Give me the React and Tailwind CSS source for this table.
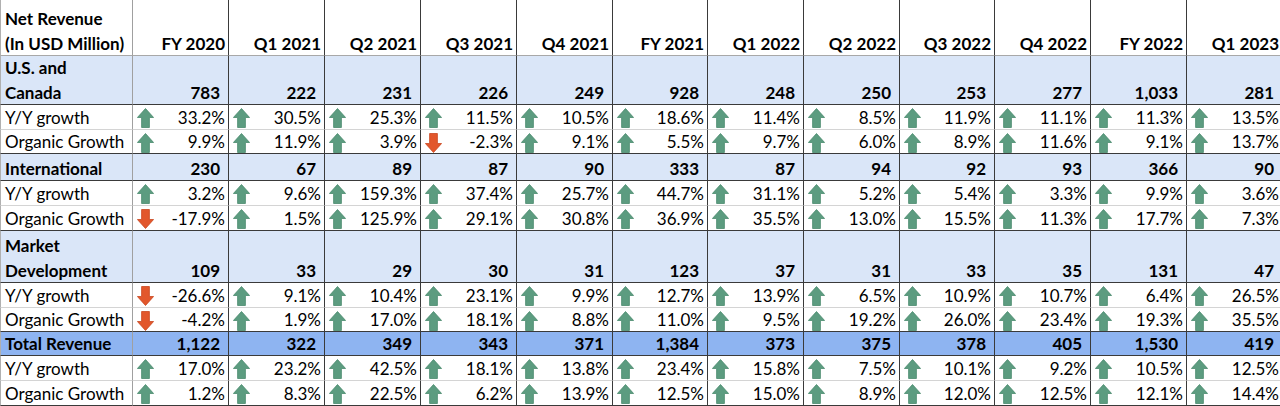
import React from "react";

const cols = ["FY 2020","Q1 2021","Q2 2021","Q3 2021","Q4 2021","FY 2021","Q1 2022","Q2 2022","Q3 2022","Q4 2022","FY 2022","Q1 2023"];

const rows = [
  { type: "blue", label: ["U.S. and", "Canada"], vals: ["783","222","231","226","249","928","248","250","253","277","1,033","281"] },
  { type: "yy", label: "Y/Y growth", vals: ["33.2","30.5","25.3","11.5","10.5","18.6","11.4","8.5","11.9","11.1","11.3","13.5"] },
  { type: "org", label: "Organic Growth", vals: ["9.9","11.9","3.9","-2.3","9.1","5.5","9.7","6.0","8.9","11.6","9.1","13.7"] },
  { type: "blue", label: "International", vals: ["230","67","89","87","90","333","87","94","92","93","366","90"] },
  { type: "yy", label: "Y/Y growth", vals: ["3.2","9.6","159.3","37.4","25.7","44.7","31.1","5.2","5.4","3.3","9.9","3.6"] },
  { type: "org", label: "Organic Growth", vals: ["-17.9","1.5","125.9","29.1","30.8","36.9","35.5","13.0","15.5","11.3","17.7","7.3"] },
  { type: "blue", label: ["Market", "Development"], vals: ["109","33","29","30","31","123","37","31","33","35","131","47"] },
  { type: "yy", label: "Y/Y growth", vals: ["-26.6","9.1","10.4","23.1","9.9","12.7","13.9","6.5","10.9","10.7","6.4","26.5"] },
  { type: "org", label: "Organic Growth", vals: ["-4.2","1.9","17.0","18.1","8.8","11.0","9.5","19.2","26.0","23.4","19.3","35.5"] },
  { type: "total", label: "Total Revenue", vals: ["1,122","322","349","343","371","1,384","373","375","378","405","1,530","419"] },
  { type: "yy", label: "Y/Y growth", vals: ["17.0","23.2","42.5","18.1","13.8","23.4","15.8","7.5","10.1","9.2","10.5","12.5"] },
  { type: "org", label: "Organic Growth", vals: ["1.2","8.3","22.5","6.2","13.9","12.5","15.0","8.9","12.0","12.5","12.1","14.4"] },
];

function Arrow({ down }) {
  if (down) {
    return (
      <svg width="17" height="20" viewBox="0 0 17 20" className="absolute left-[4px] top-[3px]">
        <path d="M4.6 0.5 L12.4 0.5 L12.4 10.5 L16.6 10.5 L8.5 19.5 L0.4 10.5 L4.6 10.5 Z" fill="#e2572c" stroke="#c9461f" strokeWidth="0.8" strokeLinejoin="round" />
      </svg>
    );
  }
  return (
    <svg width="17" height="20" viewBox="0 0 17 20" className="absolute left-[4px] top-[3px]">
      <path d="M8.5 0.5 L16.6 9.5 L12.4 9.5 L12.4 19.5 L4.6 19.5 L4.6 9.5 L0.4 9.5 Z" fill="#5c9c80" stroke="#4a8a6d" strokeWidth="0.8" strokeLinejoin="round" />
    </svg>
  );
}

export default function App() {
  return (
    <div className="w-[1280px] h-[406px] overflow-hidden bg-white text-black" style={{ fontFamily: "Lato, 'Open Sans', sans-serif" }}>
      <div className="grid w-[1283px] grid-cols-[133px_96px_96px_96px_96px_96px_95px_96px_96px_95px_96px_96px_96px] grid-rows-[56px_49px_25px_24px_27px_25px_25px_52px_25px_24px_24px_25px_25px] text-[17px] leading-[22px]">
        <div className="flex flex-col justify-end gap-[3px] border-l border-l-[#b0b0b0] border-r border-r-[#a0a0a0] border-b border-b-[#a8a8a8] pl-[4px] font-bold whitespace-nowrap">
          <span>Net Revenue</span>
          <span>(In USD Million)</span>
        </div>
        {cols.map((c) => (
          <div key={c} className="flex items-end justify-end border-r border-r-[#3a3a3a] border-b border-b-[#a8a8a8] pr-[3px] font-bold whitespace-nowrap">
            {c}
          </div>
        ))}
        {rows.map((r, ri) => {
          const isBlue = r.type === "blue";
          const isTotal = r.type === "total";
          const bg = isBlue ? "bg-[#dae6f8]" : isTotal ? "bg-[#8eb4f1]" : "bg-white";
          const bb = r.type === "yy" ? "border-b-[#d4d4d4]" : "border-b-[#3a3a3a]";
          const bold = isBlue || isTotal ? "font-bold" : "";
          return (
            <React.Fragment key={ri}>
              <div className={`flex flex-col justify-end gap-[3px] border-l border-l-[#b0b0b0] border-r border-r-[#a0a0a0] border-b ${bb} ${bg} ${bold} pl-[4px] whitespace-nowrap`}>
                {Array.isArray(r.label) ? r.label.map((l) => <span key={l}>{l}</span>) : <span>{r.label}</span>}
              </div>
              {r.vals.map((v, vi) => {
                if (isBlue || isTotal) {
                  return (
                    <div key={vi} className={`flex items-end justify-end border-r border-r-[#3a3a3a] border-b ${bb} ${bg} font-bold pr-[8px]`}>
                      {v}
                    </div>
                  );
                }
                const down = v.startsWith("-");
                return (
                  <div key={vi} className={`relative flex items-end justify-end border-r border-r-[#3a3a3a] border-b ${bb} bg-white pr-[3px]`}>
                    <Arrow down={down} />
                    <span>{v}%</span>
                  </div>
                );
              })}
            </React.Fragment>
          );
        })}
      </div>
    </div>
  );
}
